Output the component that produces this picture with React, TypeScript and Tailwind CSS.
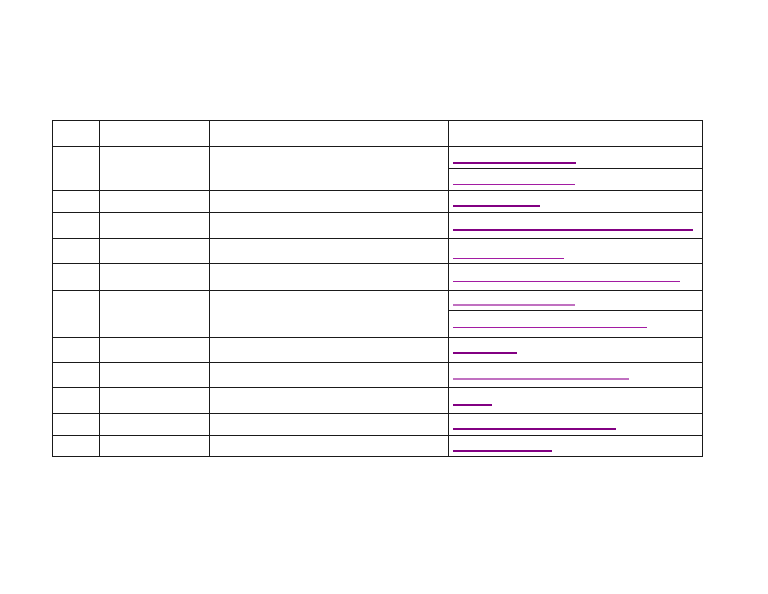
import React from "react";

type Row = { h: string; mt: string; w: string; kind: "thick" | "thin" | "light"; span?: number; skip?: boolean };

const rows: Row[] = [
  { h: "h-[22px]", mt: "mt-[15px]", w: "w-[123px]", kind: "thick", span: 2 },
  { h: "h-[22px]", mt: "mt-[15px]", w: "w-[122px]", kind: "thin", skip: true },
  { h: "h-[22px]", mt: "mt-[14px]", w: "w-[87px]", kind: "thick" },
  { h: "h-[26px]", mt: "mt-[16px]", w: "w-[240px]", kind: "thick" },
  { h: "h-[25px]", mt: "mt-[19px]", w: "w-[111px]", kind: "thin" },
  { h: "h-[27px]", mt: "mt-[17px]", w: "w-[227px]", kind: "thin" },
  { h: "h-[20px]", mt: "mt-[13px]", w: "w-[122px]", kind: "light", span: 2 },
  { h: "h-[27px]", mt: "mt-[16px]", w: "w-[194px]", kind: "thin", skip: true },
  { h: "h-[25px]", mt: "mt-[14px]", w: "w-[64px]", kind: "thick" },
  { h: "h-[25px]", mt: "mt-[15px]", w: "w-[176px]", kind: "light" },
  { h: "h-[26px]", mt: "mt-[16px]", w: "w-[39px]", kind: "thick" },
  { h: "h-[22px]", mt: "mt-[14px]", w: "w-[163px]", kind: "thick" },
  { h: "h-[21px]", mt: "mt-[14px]", w: "w-[99px]", kind: "thick" },
];

const barClass: Record<Row["kind"], string> = {
  thick: "h-[2px] bg-[#820082]",
  thin: "h-[1px] bg-[#a21ca2]",
  light: "h-[2px] bg-[#c070c0]",
};

const cell = "border border-[#1a1a1a] p-0 align-top";

export default function App() {
  return (
    <div className="min-h-[594px] w-[768px] bg-white pt-[120px] pl-[52px]" style={{ fontFamily: '"Liberation Serif", serif' }}>
      <table className="table-fixed border-collapse w-[650px]">
        <colgroup>
          <col className="w-[47px]" />
          <col className="w-[110px]" />
          <col className="w-[239px]" />
          <col className="w-[254px]" />
        </colgroup>
        <tbody>
          <tr className="h-[26px]">
            <td className={cell}></td>
            <td className={cell}></td>
            <td className={cell}></td>
            <td className={cell}></td>
          </tr>
          {rows.map((r, i) => (
            <tr key={i} className={r.h}>
              {!r.skip && (
                <>
                  <td className={cell} rowSpan={r.span ?? 1}></td>
                  <td className={cell} rowSpan={r.span ?? 1}></td>
                  <td className={cell} rowSpan={r.span ?? 1}></td>
                </>
              )}
              <td className={cell}>
                <a href="#" className="block">
                  <div className={`${r.mt} ml-[4px] ${r.w} ${barClass[r.kind]}`}></div>
                </a>
              </td>
            </tr>
          ))}
        </tbody>
      </table>
    </div>
  );
}
